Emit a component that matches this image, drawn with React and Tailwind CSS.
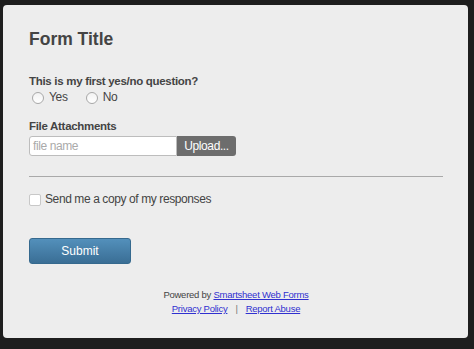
import React from 'react'

const Radio = ({label}) => (
  <label className="flex items-center">
    <span className="w-[12px] h-[12px] rounded-full border border-[#a8a8a8] bg-gradient-to-b from-[#f2f2f2] to-[#ffffff] mr-[5px]" />
    <span className="text-[12px] tracking-[-0.3px] text-[#444]">{label}</span>
  </label>
)

const App = () => {
  return (
    <div className="w-[474px] h-[349px] bg-[#1e1e1e] pt-[5px] pl-[3px] pr-[6px] font-['Liberation_Sans',Arial,sans-serif]">
      <div className="h-[333px] bg-[#ededed] rounded-[4px] px-[26px] pt-[23px]">
        <h1 className="text-[17.5px] leading-[22px] font-bold text-[#444]">Form Title</h1>

        <div className="mt-[24px]">
          <div className="text-[11.5px] tracking-[-0.3px] leading-[15px] font-bold text-[#444]">This is my first yes/no question?</div>
          <div className="flex gap-[18px] pl-[3px] mt-[1px] leading-[15px]">
            <Radio label="Yes" />
            <Radio label="No" />
          </div>
        </div>

        <div className="mt-[14px]">
          <div className="text-[11.5px] tracking-[-0.3px] leading-[15px] font-bold text-[#444]">File Attachments</div>
          <div className="flex mt-[2px]">
            <div className="w-[148px] h-[20px] bg-white border border-[#bdbdbd] rounded-l-[3px] pl-[3px] text-[12px] tracking-[-0.4px] leading-[18px] text-[#aaa]">file name</div>
            <div className="w-[59px] h-[20px] bg-[#6d6d6d] rounded-r-[3px] text-white text-[12px] tracking-[-0.4px] leading-[20px] text-center">Upload...</div>
          </div>
        </div>

        <div className="mt-[20px] h-px bg-[#a9a9a9] w-[414px]" />

        <label className="flex items-center mt-[14px] leading-[17px]">
          <span className="w-[12px] h-[12px] rounded-[2px] border border-[#c8c8c8] bg-white mr-[4px]" />
          <span className="text-[12px] tracking-[-0.4px] text-[#444]">Send me a copy of my responses</span>
        </label>

        <button className="mt-[30px] w-[102px] h-[26px] rounded-[3px] border border-[#35698e] bg-gradient-to-b from-[#5390bb] to-[#3a6e95] text-white text-[12px]">Submit</button>

        <div className="mt-[24px] text-center text-[9.5px] tracking-[-0.25px] leading-[14px] text-[#444] w-[414px]">
          <div>Powered by <a className="text-[#3030d0] underline">Smartsheet Web Forms</a></div>
          <div>
            <a className="text-[#3030d0] underline">Privacy Policy</a>
            <span className="mx-[8px] text-[#777]">|</span>
            <a className="text-[#3030d0] underline">Report Abuse</a>
          </div>
        </div>
      </div>
    </div>
  )
}

export default App
